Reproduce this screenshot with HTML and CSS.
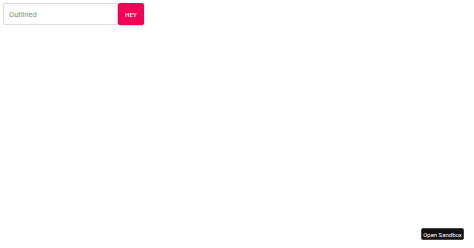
FILE: index.html
```html
<!DOCTYPE html>
<html>
<head>
<meta charset="utf-8">
<link rel="stylesheet" href="styles.css">
</head>
<body>
<div class="row">
  <div class="field"><span class="placeholder">Outlined</span></div>
  <button class="hey">HEY</button>
</div>
<div class="sandbox">Open Sandbox</div>
</body>
</html>
```
FILE: styles.css
```css
html, body {
  margin: 0;
  padding: 0;
  background: #fff;
  font-family: Roboto, "Liberation Sans", sans-serif;
}
body {
  width: 474px;
  height: 248px;
  position: relative;
  overflow: hidden;
}
.row {
  display: flex;
  align-items: stretch;
  padding: 3px 0 0 3px;
}
.field {
  width: 108px;
  height: 20px;
  border: 1px solid #dcdcdc;
  border-radius: 2px;
  display: flex;
  align-items: center;
  padding-left: 5px;
  box-sizing: content-box;
}
.placeholder {
  font-size: 7.5px;
  color: #888;
}
.hey {
  width: 26px;
  height: 22px;
  border: none;
  border-radius: 2px;
  background: #f50057;
  color: #fff;
  font-family: Roboto, "Liberation Sans", sans-serif;
  font-size: 6px;
  font-weight: 500;
  letter-spacing: 0.2px;
  padding: 0;
  box-shadow: 0 1px 2px rgba(0,0,0,0.2);
}
.sandbox {
  position: absolute;
  left: 421px;
  top: 228px;
  width: 43px;
  height: 12px;
  background: #111;
  border-radius: 2px;
  color: #fff;
  font-size: 6px;
  display: flex;
  align-items: center;
  justify-content: center;
  border: 0.5px solid #444;
  box-sizing: border-box;
}
```
